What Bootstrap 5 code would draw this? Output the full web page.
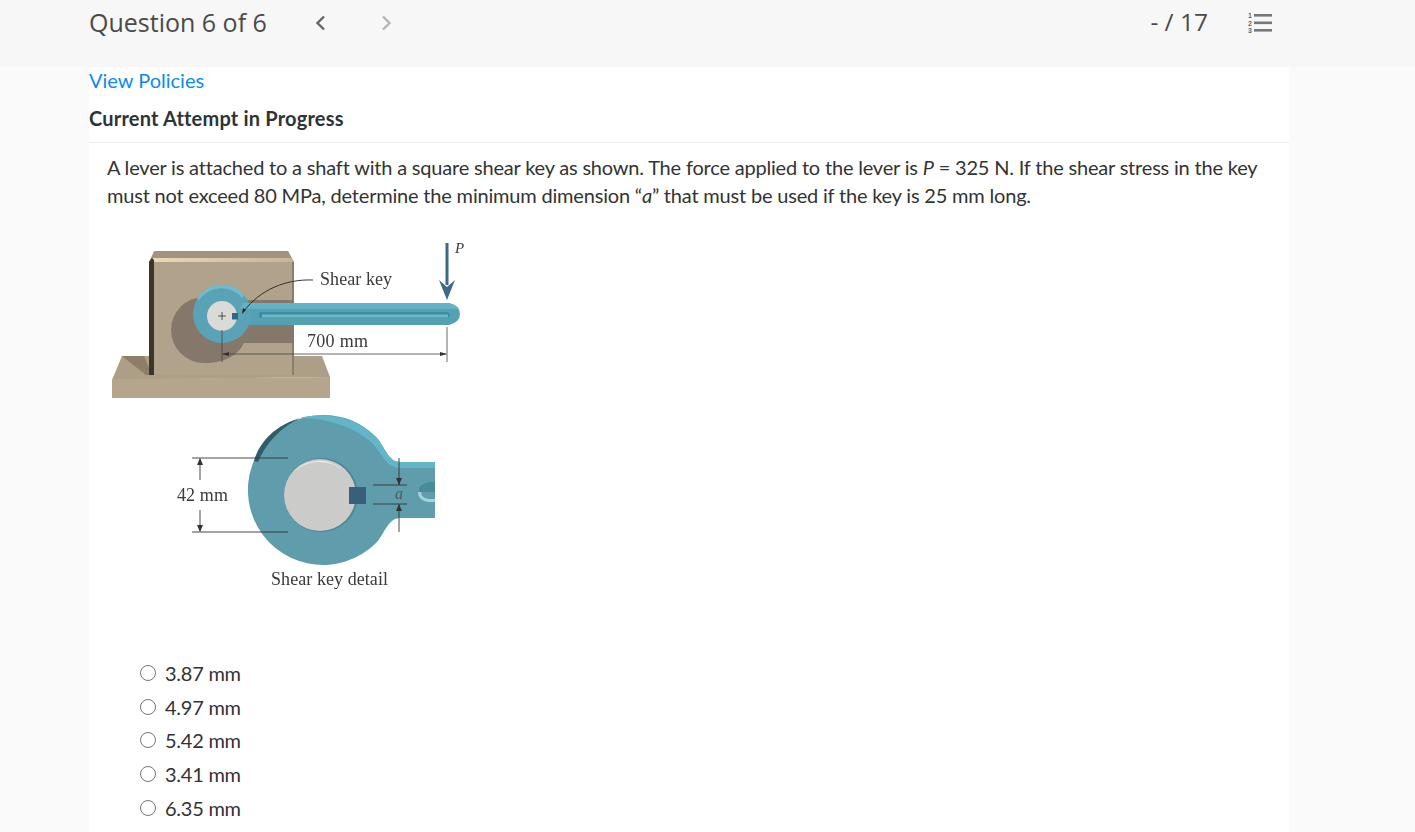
<!DOCTYPE html>
<html lang="en">
<head>
<meta charset="utf-8">
<title>Question 6 of 6</title>
<link rel="stylesheet" href="https://cdn.jsdelivr.net/npm/bootstrap@5.3.0/dist/css/bootstrap.min.css">
<style>
html, body { height: 832px; overflow: hidden; }
body { background: #fafafa; font-family: Lato, "Liberation Sans", sans-serif; color: #333; font-size: 20px; }
.q-top { background: #f7f7f7; height: 67px; padding: 0 0 0 89px; }
.q-top-inner { width: 1200px; height: 45px; }
.q-title { font-family: "Open Sans", sans-serif; font-size: 25px; color: #4a4a4a; width: 225px; }
.q-score { font-family: "Open Sans", sans-serif; font-size: 24.500px; color: #4a4a4a; margin-right: 39px; }
.q-nav { width: 66px; }
.q-sheet { width: 1200px; margin-left: 89px; background: #fff; height: 765px; }
.q-link { color: #0a8ced; text-decoration: none; line-height: 26px; display: block; }
.q-sub { font-weight: 700; font-size: 20px; letter-spacing: .19px; color: #2d3338; line-height: 28px; margin: 11px 0 10px; }
.q-rule { border-top: 1px solid #ececec; }
.q-text { padding: 10px 18px 0; line-height: 28px; margin: 0; color: #333; letter-spacing: -.19px; }
.q-fig { display: block; width: 370px; height: 370px; margin: 23px 0 0 18px; }
.q-opts { padding: 54px 0 0 51px; }
.q-opts .form-check { min-height: 0; height: 33.750px; margin: 0; padding-left: 0; display: flex; align-items: center; gap: 9px; }
.q-opts .form-check-input { width: 16px; height: 16px; margin: 0; border: 1px solid #767676; flex: none; }
.q-opts .form-check-label { line-height: 28px; color: #333; letter-spacing: -.25px; }
.f-serif { font-family: "Liberation Serif", serif; fill: #3a3a3a; }
</style>
</head>
<body>
<header class="q-top">
  <div class="q-top-inner d-flex align-items-center">
    <div class="q-title">Question 6 of 6</div>
    <div class="q-nav d-flex align-items-center">
      <svg width="12" height="16" viewBox="0 0 12 16"><path d="M10 1.500 3.500 8l6.500 6.500" fill="none" stroke="#666" stroke-width="2.400"/></svg>
    </div>
    <svg width="12" height="16" viewBox="0 0 12 16"><path d="M3 1.500 9.500 8 3 14.500" fill="none" stroke="#b5b5b5" stroke-width="2.400"/></svg>
    <div class="q-score ms-auto">- / 17</div>
    <svg width="26" height="22" viewBox="0 0 26 22">
      <g fill="#777"><rect x="7" y="2" width="18" height="2.600"/><rect x="7" y="9.500" width="18" height="2.600"/><rect x="7" y="17" width="18" height="2.600"/></g>
      <g font-family="Liberation Sans, sans-serif" font-size="7" font-weight="700" fill="#666"><text x="1" y="6">1</text><text x="1" y="13.500">2</text><text x="1" y="21">3</text></g>
    </svg>
    <div class="pe-3"></div>
  </div>
</header>
<main class="q-sheet">
  <a class="q-link" href="#">View Policies</a>
  <div class="q-sub">Current Attempt in Progress</div>
  <div class="q-rule"></div>
  <p class="q-text">A lever is attached to a shaft with a square shear key as shown. The force applied to the lever is <i>P</i> = 325 N. If the shear stress in the key must not exceed 80 MPa, determine the minimum dimension “<i>a</i>” that must be used if the key is 25 mm long.</p>
  <svg class="q-fig" viewBox="107 232 370 370" role="img" aria-label="Lever and shear key diagram">
    <defs>
      <filter id="soft" x="-5%" y="-5%" width="110%" height="110%"><feGaussianBlur stdDeviation="0.600"/></filter>
      <filter id="softt" x="-5%" y="-20%" width="110%" height="140%"><feGaussianBlur stdDeviation="0.250"/></filter>
      <linearGradient id="hiband" x1="0" y1="0" x2="1" y2="0"><stop offset="0" stop-color="#ecd9b8"/><stop offset="1" stop-color="#c9b596"/></linearGradient>
      <clipPath id="blockclip"><path d="M149 262l5-11h134l6 11v113H149z"/></clipPath>
    </defs>
    <g filter="url(#soft)">
      <path d="M122 356H322L330 377 112 380Z" fill="#ad9e87"/>
      <path d="M122 356h22l8 19h-6Z" fill="#8d7e69"/>
      <path d="M112 379L330 377V398H112Z" fill="#b5a58d"/>
      <path d="M149 262l5-11h134l6 11v113H149z" fill="#b1a28c"/>
      <path d="M150 261l5-10h133l5 10z" fill="#a39380"/>
      <path d="M153 258h138l2 4H151z" fill="url(#hiband)"/>
      <path d="M149 262l3-4 2 2v115h-5z" fill="#3b342b"/>
      <path d="M292 375v-112l2-2v114z" fill="#8a7d69"/>
      <g clip-path="url(#blockclip)">
        <circle cx="204" cy="330" r="33" fill="#85786a"/>
        <path d="M204 300h90v43h-50q-10 20-40 20z" fill="#85786a"/>
      </g>
      <path d="M243 303H449q11 3 11 11t-11 11H243q-7-11 0-22z" fill="#55a1b4"/>
      <circle cx="222" cy="314" r="29" fill="#5aa3b6"/>
      <path d="M197 299a29 29 0 0 1 47 -4l-2 3a27 27 0 0 0-43 2z" fill="#6fbccd"/>
      <path d="M243 303H449q8 2 10 6H240z" fill="#63b2c5"/>
      <path d="M260 312H448q3 3 0 6H260q-2-3 0-6z" fill="#3f8a9e"/>
      <path d="M262 314.500H448v3H262z" fill="#6db8c9"/>
      <circle cx="222" cy="316" r="15" fill="#dadad7"/>
      <rect x="232" y="313" width="6" height="6.500" fill="#2f6888"/>
      <path d="M218 316h8M222 312v8" stroke="#333" stroke-width="0.800"/>
      <path d="M313 280C285 279 260 290 244 311" fill="none" stroke="#222" stroke-width="0.900"/>
      <path d="M242 314l1-6 3 2z" fill="#222"/>
      <path d="M222 330v32M447 327v35M223 354H446" stroke="#444" stroke-width="0.800" fill="none"/>
      <path d="M222 354l7-2v4zM447 354l-7-2v4z" fill="#333"/>
      <path d="M447 243V285" stroke="#3e6a86" stroke-width="3"/>
      <path d="M439 280 447 300 455 280 447 287Z" fill="#3e6a86"/>

      <path d="M323 415A75 75 0 0 1 376 437C384 445 388 462 400 462H435V518H400C388 518 384 535 376 543A75 75 0 1 1 323 415Z" fill="#5f9dac"/>
      <path d="M300 418C325 412 356 417 376 437C384 445 388 462 400 462H435V468H400C386 468 382 453 372 443 358 429 330 418 300 418Z" fill="#62b6c7"/>
      <path d="M254 461C260 440 277 425 300 418 282 427 266 442 258 462Z" fill="#2e5b68"/>
      <path d="M435 482H428Q418 484 418 492T428 502H435V499H429Q421 498 421 492T429 485H435Z" fill="#a5d3dd"/>
      <path d="M435 482H428Q418 484 418 492H435Z" fill="#4a8a9b"/>
      <circle cx="321" cy="495" r="37" fill="#4d8695"/>
      <circle cx="320" cy="495" r="36" fill="#cbcbc9"/>
      <path d="M293 472a36 36 0 0 1 50 -2 38 36 0 0 0-50 2z" fill="#efefed"/>
      <rect x="349" y="487" width="17" height="17" fill="#37607c"/>
      <path d="M192 458H288M192 532H288M373 485H407M373 504H407" stroke="#333" stroke-width="0.900" fill="none"/>
      <path d="M200 459V480M200 510V531M399 458V485M399 504V532" stroke="#333" stroke-width="0.900" fill="none"/>
      <path d="M200 458l-3 7h6zM200 532l-3-7h6zM399 485l-3-7h6zM399 504l-3 7h6z" fill="#333"/>
    </g>
    <g class="f-serif" font-size="18" filter="url(#softt)">
      <text x="320" y="285" textLength="72">Shear key</text>
      <text x="307" y="347" textLength="61">700 mm</text>
      <text x="177" y="501" textLength="51">42 mm</text>
      <text x="271" y="585" textLength="117">Shear key detail</text>
      <text x="455" y="253" font-size="15" font-style="italic">P</text>
      <text x="395" y="499" font-size="16" font-style="italic" fill="#555">a</text>
    </g>
  </svg>
  <div class="q-opts">
    <div class="form-check"><input class="form-check-input" type="radio" name="ans" id="a1"><label class="form-check-label" for="a1">3.87 mm</label></div>
    <div class="form-check"><input class="form-check-input" type="radio" name="ans" id="a2"><label class="form-check-label" for="a2">4.97 mm</label></div>
    <div class="form-check"><input class="form-check-input" type="radio" name="ans" id="a3"><label class="form-check-label" for="a3">5.42 mm</label></div>
    <div class="form-check"><input class="form-check-input" type="radio" name="ans" id="a4"><label class="form-check-label" for="a4">3.41 mm</label></div>
    <div class="form-check"><input class="form-check-input" type="radio" name="ans" id="a5"><label class="form-check-label" for="a5">6.35 mm</label></div>
  </div>
</main>
<script src="https://cdn.jsdelivr.net/npm/bootstrap@5.3.0/dist/js/bootstrap.bundle.min.js"></script>
</body>
</html>
